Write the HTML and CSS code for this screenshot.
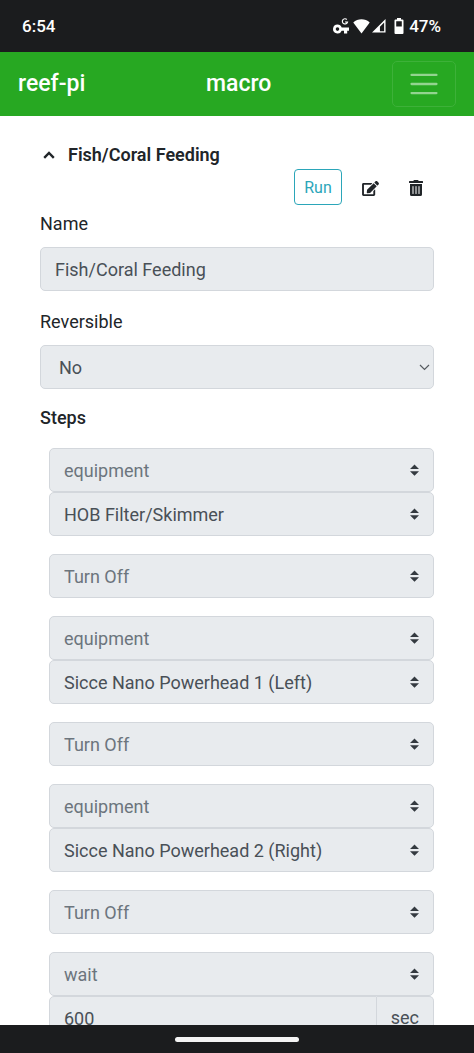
FILE: index.html
```html
<!DOCTYPE html>
<html lang="en">
<head>
<meta charset="utf-8">
<meta name="viewport" content="width=device-width, initial-scale=1">
<title>reef-pi macro</title>
<link rel="stylesheet" href="styles.css">
</head>
<body>
<svg class="sprite" aria-hidden="true">
  <symbol id="sort" viewBox="0 0 4 5"><path d="M2 0L0 2h4zm0 5L0 3h4z"/></symbol>
</svg>
<div class="screen">
  <div class="status">
    <span>6:54</span>
    <div class="status-icons">
      <svg class="key" width="16" height="17" viewBox="0 0 16 17" aria-hidden="true">
        <path fill="#fff" fill-rule="evenodd" d="M4.500 6.500a4.500 4.500 0 1 0 4.200 6.200H11V15.500h3.200V12.700H16V9.400H8.700A4.500 4.500 0 0 0 4.500 6.500zM4.500 9.300a1.800 1.800 0 1 1 0 3.600a1.800 1.800 0 0 1 0-3.600z"/>
        <path fill="none" stroke="#fff" stroke-width="1.200" d="M13.800 1.500A2.600 2.600 0 1 0 14.500 4H12"/>
      </svg>
      <svg width="17" height="15" viewBox="0 0 18 15" preserveAspectRatio="none" aria-hidden="true"><path fill="#fff" d="M0.300 3.500C5 -0.700 13 -0.700 17.700 3.500L9 14.500z"/></svg>
      <svg width="14" height="14" viewBox="0 0 15 15" aria-hidden="true"><path fill="#fff" fill-rule="evenodd" d="M14.500 0v14.500H0zM13 3.800L8.500 8.300V13H13z"/></svg>
      <svg class="battery" width="10" height="16" viewBox="0 0 10 16" aria-hidden="true"><path fill="#fff" fill-rule="evenodd" d="M3 0h4v1.500h1.500q1 0 1 1V15q0 1-1 1h-7q-1 0-1-1V2.500q0-1 1-1H3zM2.200 3.300V8.500h5.600V3.300z"/></svg>
      <span>47%</span>
    </div>
  </div>

  <nav class="navbar">
    <a class="brand" href="#">reef-pi</a>
    <a class="brand" href="#">macro</a>
    <button class="toggler" type="button" aria-label="Toggle navigation">
      <svg width="34" height="34" viewBox="0 0 30 30" aria-hidden="true"><path stroke="currentColor" stroke-width="2" stroke-linecap="round" d="M4 7h22M4 15h22M4 23h22"/></svg>
    </button>
  </nav>

  <main class="content">
    <h1 class="title">
      <svg width="18" height="18" viewBox="0 0 18 18" aria-hidden="true"><path fill="none" stroke="currentColor" stroke-width="2.400" d="M4.200 11.800L9 7l4.800 4.800"/></svg>
      <span>Fish/Coral Feeding</span>
    </h1>
    <div class="actions">
      <button class="run" type="button">Run</button>
      <button class="icon-button" type="button" aria-label="Edit">
        <svg width="17" height="15" viewBox="0 0 576 512" aria-hidden="true"><path fill="currentColor" d="M402.600 83.200l90.200 90.200c3.800 3.800 3.800 10 0 13.800L274.400 405.600l-92.800 10.300c-12.400 1.400-22.900-9.100-21.500-21.500l10.300-92.800L388.800 83.200c3.800-3.800 10-3.800 13.800 0zm162-22.900l-48.800-48.800c-15.200-15.200-39.900-15.200-55.200 0l-35.400 35.400c-3.800 3.800-3.800 10 0 13.800l90.200 90.200c3.800 3.800 10 3.800 13.800 0l35.400-35.400c15.200-15.300 15.200-40 0-55.200zM384 346.200V448H64V128h229.800c3.200 0 6.200-1.300 8.500-3.500l40-40c7.600-7.600 2.200-20.500-8.500-20.500H48C21.500 64 0 85.500 0 112v352c0 26.500 21.500 48 48 48h352c26.500 0 48-21.500 48-48V306.200c0-10.700-12.900-16-20.500-8.500l-40 40c-2.200 2.300-3.500 5.300-3.500 8.500z"/></svg>
      </button>
      <button class="icon-button" type="button" aria-label="Delete">
        <svg width="14" height="16" viewBox="0 0 448 512" aria-hidden="true"><path fill="currentColor" fill-rule="evenodd" d="M32 464a48 48 0 0 0 48 48h288a48 48 0 0 0 48-48V128H32zm272-256a16 16 0 0 1 32 0v224a16 16 0 0 1-32 0zm-96 0a16 16 0 0 1 32 0v224a16 16 0 0 1-32 0zm-96 0a16 16 0 0 1 32 0v224a16 16 0 0 1-32 0zM432 32H312l-9.400-18.700A24 24 0 0 0 281.100 0H166.800a23.700 23.700 0 0 0-21.400 13.300L136 32H16A16 16 0 0 0 0 48v32a16 16 0 0 0 16 16h416a16 16 0 0 0 16-16V48a16 16 0 0 0-16-16z"/></svg>
      </button>
    </div>

    <form>
      <div class="group">
        <label class="label" for="name">Name</label>
        <input class="control" id="name" type="text" value="Fish/Coral Feeding" disabled>
      </div>
      <div class="group">
        <label class="label" for="reversible">Reversible</label>
        <div class="select">
          <select class="control indented" id="reversible" disabled><option>No</option></select>
          <svg class="chevron" width="11" height="7" viewBox="0 0 11 7" aria-hidden="true"><path fill="none" stroke="currentColor" stroke-width="1.200" d="M1 1l4.500 4.500L10 1"/></svg>
        </div>
      </div>

      <h2 class="steps-title">Steps</h2>
      <div class="steps">
        <div class="step">
          <div class="select"><select class="control muted" aria-label="Step 1 type" disabled><option>equipment</option></select><svg class="sort"><use href="#sort"/></svg></div>
          <div class="select"><select class="control" aria-label="Step 1 equipment" disabled><option>HOB Filter/Skimmer</option></select><svg class="sort"><use href="#sort"/></svg></div>
          <div class="select action"><select class="control muted" aria-label="Step 1 action" disabled><option>Turn Off</option></select><svg class="sort"><use href="#sort"/></svg></div>
        </div>
        <div class="step">
          <div class="select"><select class="control muted" aria-label="Step 2 type" disabled><option>equipment</option></select><svg class="sort"><use href="#sort"/></svg></div>
          <div class="select"><select class="control" aria-label="Step 2 equipment" disabled><option>Sicce Nano Powerhead 1 (Left)</option></select><svg class="sort"><use href="#sort"/></svg></div>
          <div class="select action"><select class="control muted" aria-label="Step 2 action" disabled><option>Turn Off</option></select><svg class="sort"><use href="#sort"/></svg></div>
        </div>
        <div class="step">
          <div class="select"><select class="control muted" aria-label="Step 3 type" disabled><option>equipment</option></select><svg class="sort"><use href="#sort"/></svg></div>
          <div class="select"><select class="control" aria-label="Step 3 equipment" disabled><option>Sicce Nano Powerhead 2 (Right)</option></select><svg class="sort"><use href="#sort"/></svg></div>
          <div class="select action"><select class="control muted" aria-label="Step 3 action" disabled><option>Turn Off</option></select><svg class="sort"><use href="#sort"/></svg></div>
        </div>
        <div class="step">
          <div class="select"><select class="control muted" aria-label="Step 4 type" disabled><option>wait</option></select><svg class="sort"><use href="#sort"/></svg></div>
          <div class="input-group">
            <input class="control" id="duration" type="text" value="600" disabled>
            <label class="addon" for="duration">sec</label>
          </div>
        </div>
      </div>
    </form>
  </main>

  <div class="gesture-bar"><div class="handle"></div></div>
</div>
</body>
</html>
```
FILE: styles.css
```css
* {
  box-sizing: border-box;
}

body {
  margin: 0;
  background: #fff;
  color: #212529;
  font-family: Roboto, sans-serif;
  font-size: 18px;
  line-height: 28px;
}

svg {
  display: block;
}

.sprite {
  display: none;
}

.screen {
  display: flex;
  flex-direction: column;
  height: 100vh;
}

.status {
  display: flex;
  flex: none;
  align-items: center;
  justify-content: space-between;
  height: 52px;
  padding: 0 33px 0 22px;
  background: #1b1c1e;
  color: #fff;
  font-size: 17px;
  font-weight: 500;
}

.status-icons {
  display: flex;
  align-items: center;
  gap: 2px;
}

.key {
  margin-right: 2px;
}

.battery {
  margin: 0 3px 0 6px;
}

.navbar {
  display: flex;
  flex: none;
  align-items: center;
  justify-content: space-between;
  height: 64px;
  padding: 0 18px;
  background: #27a822;
}

.brand {
  color: #fff;
  font-size: 23px;
  font-weight: 500;
  text-decoration: none;
}

.toggler {
  display: flex;
  align-items: center;
  justify-content: center;
  width: 64px;
  height: 46px;
  padding: 0;
  border: 1px solid #3db139;
  border-radius: 5px;
  background: transparent;
  color: #93d490;
}

.content {
  flex: 1;
  min-height: 0;
  overflow: hidden;
  padding: 25px 40px 0;
}

.title {
  display: flex;
  align-items: center;
  gap: 10px;
  margin: 0;
  font-size: 18px;
  font-weight: 600;
}

.actions {
  display: flex;
  justify-content: flex-end;
  gap: 10px;
  margin-bottom: 5px;
}

.run {
  width: 48px;
  height: 36px;
  padding: 0;
  border: 1px solid #2ba6b9;
  border-radius: 4px;
  background: #fff;
  color: #2ba6b9;
  font-family: inherit;
  font-size: 16px;
}

.icon-button {
  display: flex;
  align-items: center;
  justify-content: center;
  width: 36px;
  height: 36px;
  padding: 2px 0 0;
  border: 0;
  background: transparent;
  color: #212529;
}

.group {
  margin-bottom: 17px;
}

.label {
  display: block;
  margin-bottom: 9px;
}

.control {
  display: block;
  width: 100%;
  height: 44px;
  margin: 0;
  padding: 0 14px;
  border: 1px solid #d3d7dc;
  border-radius: 5px;
  background: #e8ebee;
  color: #495057;
  font-family: inherit;
  font-size: 18px;
  appearance: none;
  opacity: 1;
}

.indented {
  padding-left: 18px;
}

.muted {
  color: #6c757d;
}

.select {
  position: relative;
}

.sort,
.chevron {
  position: absolute;
  top: 0;
  bottom: 0;
  margin: auto 0;
  pointer-events: none;
}

.sort {
  right: 15px;
  width: 9px;
  height: 12px;
  fill: #343a40;
}

.chevron {
  right: 4px;
  color: #565b60;
}

.steps-title {
  margin: 0 0 16px;
  font-size: 18px;
  font-weight: 500;
}

.group + .steps-title {
  margin-top: -2px;
}

.steps {
  padding-left: 9px;
}

.action {
  margin: 18px 0;
}

.input-group {
  display: flex;
}

.input-group .control {
  flex: 1;
  min-width: 0;
  border-radius: 5px 0 0 5px;
}

.addon {
  display: flex;
  align-items: center;
  height: 44px;
  padding: 0 14px;
  border: 1px solid #d3d7dc;
  border-left: 0;
  border-radius: 0 5px 5px 0;
  background: #e8ebee;
  color: #495057;
}

.gesture-bar {
  display: flex;
  flex: none;
  align-items: center;
  justify-content: center;
  height: 28px;
  background: #1b1c1e;
}

.handle {
  width: 124px;
  height: 5px;
  border-radius: 3px;
  background: #f4f4f4;
}
```
